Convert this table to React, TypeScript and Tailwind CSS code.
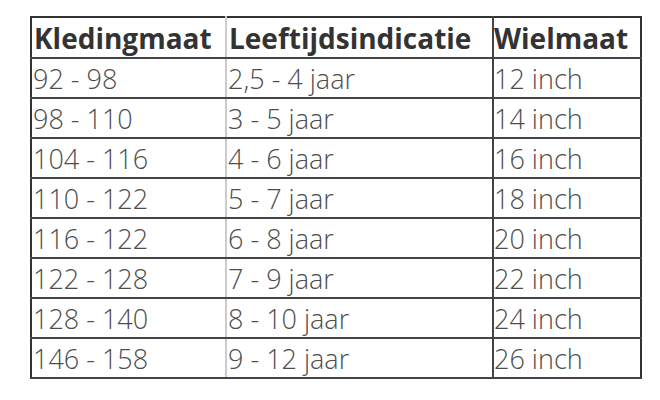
const rows = [
  ['92 - 98', '2,5 - 4 jaar', '12 inch'],
  ['98 - 110', '3 - 5 jaar', '14 inch'],
  ['104 - 116', '4 - 6 jaar', '16 inch'],
  ['110 - 122', '5 - 7 jaar', '18 inch'],
  ['116 - 122', '6 - 8 jaar', '20 inch'],
  ['122 - 128', '7 - 9 jaar', '22 inch'],
  ['128 - 140', '8 - 10 jaar', '24 inch'],
  ['146 - 158', '9 - 12 jaar', '26 inch'],
]

const headers = ['Kledingmaat', 'Leeftijdsindicatie', 'Wielmaat']

export default function App() {
  return (
    <div className="w-[660px] h-[400px] bg-white pt-4 pl-[30px] font-['Open_Sans',sans-serif] text-[#333]">
      <table className="w-[610px] border-collapse border-2 border-[#333] table-fixed">
        <colgroup>
          <col className="w-[195px]" />
          <col className="w-[267px]" />
          <col className="w-[148px]" />
        </colgroup>
        <thead>
          <tr className="h-[41px]">
            {headers.map((h, i) => (
              <th
                key={h}
                className={
                  'text-left font-bold text-[28px] leading-none whitespace-nowrap border-b-2 border-[#444] ' +
                  (i === 0 ? 'px-[2px]' : i === 1 ? 'px-[2px] border-l-2 border-l-[#ccc]' : 'px-0 border-l-2')
                }
              >
                {h}
              </th>
            ))}
          </tr>
        </thead>
        <tbody>
          {rows.map((r, i) => (
            <tr key={i} className="h-10 text-[#4d4d4d]">
              <td className="font-light text-[27px] leading-none px-[1px] border-b-2 border-[#444]">{r[0]}</td>
              <td className="font-light text-[27px] leading-none px-[1px] border-b-2 border-l-2 border-[#444] border-l-[#ccc]">{r[1]}</td>
              <td className="font-light text-[27px] leading-none px-0 border-b-2 border-l-2 border-[#444]">{r[2]}</td>
            </tr>
          ))}
        </tbody>
      </table>
    </div>
  )
}
